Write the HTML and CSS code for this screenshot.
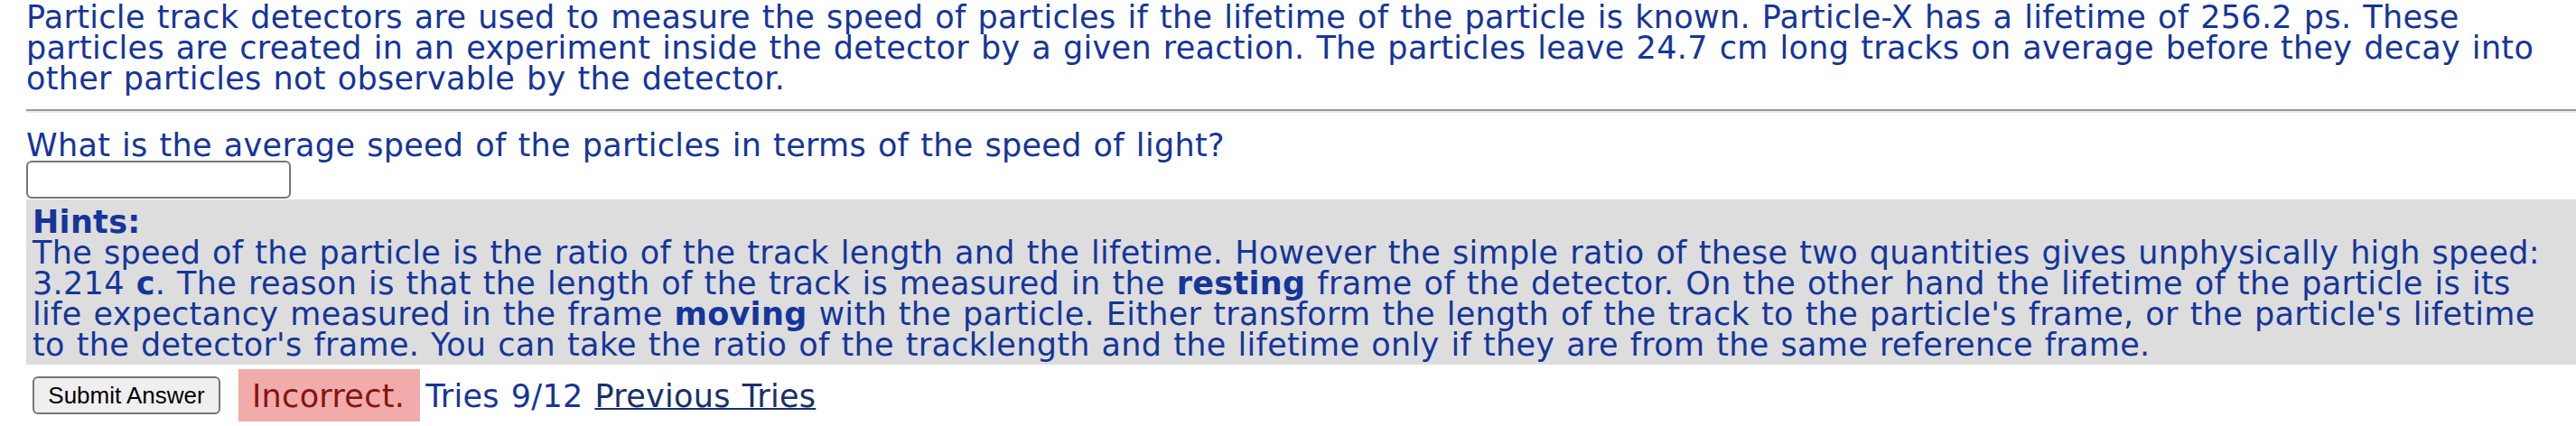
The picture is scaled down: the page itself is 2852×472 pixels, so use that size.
FILE: index.html
```html
<!DOCTYPE html>
<html lang="en">
<head>
    <meta charset="UTF-8">
    <title>Particle Track Detector</title>
    <link rel="stylesheet" href="styles.css">
</head>
<body>
    <div class="problem">
        <p class="statement">Particle track detectors are used to measure the speed of particles if the lifetime of the particle is known. Particle-X has a lifetime of 256.2 ps. These particles are created in an experiment inside the detector by a given reaction. The particles leave 24.7 cm long tracks on average before they decay into other particles not observable by the detector.</p>

        <hr class="divider">

        <p class="question">What is the average speed of the particles in terms of the speed of light?</p>
        <input type="text" class="answer-input">

        <div class="hints">
            <strong>Hints:</strong><br>
            The speed of the particle is the ratio of the track length and the lifetime. However the simple ratio of these two quantities gives unphysically high speed: 3.214 <strong>c</strong>. The reason is that the length of the track is measured in the <strong>resting</strong> frame of the detector. On the other hand the lifetime of the particle is its life expectancy measured in the frame <strong>moving</strong> with the particle. Either transform the length of the track to the particle's frame, or the particle's lifetime to the detector's frame. You can take the ratio of the tracklength and the lifetime only if they are from the same reference frame.
        </div>

        <div class="submit-row">
            <button class="submit-btn">Submit Answer</button>
            <span class="status">Incorrect.</span>
            <span class="tries">Tries 9/12 <a href="#" class="prev-link">Previous Tries</a></span>
        </div>
    </div>
</body>
</html>
```

FILE: styles.css
```css
:root {
    --text-color: #15359a;
    --link-color: #18306a;
}

body {
    margin: 0 0 0 29px;
    background: #fff;
    font-family: "DejaVu Sans", Verdana, sans-serif;
    font-size: 35px;
    line-height: 34px;
    color: var(--text-color);
    letter-spacing: 0.3px;
    word-spacing: 1.5px;
}

.statement {
    margin: 2px 26px 0 0;
}

.divider {
    margin: 17px 0 0;
    height: 0;
    border: none;
    border-top: 2px solid #9a9a9a;
    border-bottom: 2px solid #ececec;
}

.question {
    margin: 19px 0 0;
}

.answer-input {
    display: block;
    width: 293px;
    height: 42px;
    box-sizing: border-box;
    margin: 0;
    border: 2px solid #777;
    border-radius: 6px;
    background: #fff;
}

.hints {
    margin-top: 1px;
    padding: 8px 24px 5px 7px;
    background: #dddddd;
}

.submit-row {
    display: flex;
    align-items: center;
    margin-top: 5px;
}

.submit-btn {
    width: 208px;
    height: 42px;
    margin: 0 0 0 7px;
    padding: 0;
    border: 2px solid #767676;
    border-radius: 6px;
    background: #efefef;
    color: #000;
    font-family: "Liberation Sans", Arial, sans-serif;
    font-size: 26px;
    letter-spacing: 0;
    word-spacing: 0;
}

.status {
    margin-left: 20px;
    padding: 13px 17px 11px 15px;
    background: #f2abab;
    color: #85140f;
}

.tries {
    margin-left: 6px;
    margin-top: 2px;
}

.prev-link {
    color: var(--link-color);
    text-decoration-thickness: 2px;
}
```
